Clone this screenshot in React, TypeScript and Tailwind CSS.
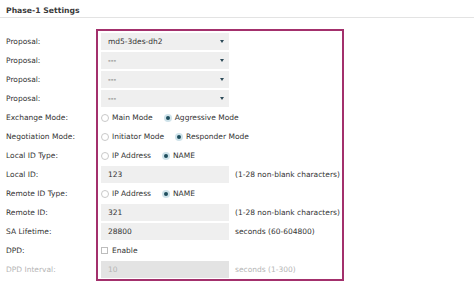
import React from "react";

const Radio = ({ on }: { on?: boolean }) =>
  on ? (
    <span className="w-[8px] h-[8px] rounded-full bg-[#cfe3ea] flex items-center justify-center shrink-0">
      <span className="w-[4px] h-[4px] rounded-full bg-[#1e4e5e]" />
    </span>
  ) : (
    <span className="w-[8px] h-[8px] rounded-full border border-[#c9c9c9] bg-white shrink-0" />
  );

const Select = ({ value }: { value: string }) => (
  <div className="w-[128px] h-[17px] bg-[#efefef] flex items-center justify-between pl-[7px] pr-[5px]">
    <span>{value}</span>
    <span className="w-0 h-0 border-l-[2.5px] border-r-[2.5px] border-t-[3px] border-l-transparent border-r-transparent border-t-[#2c4a58]" />
  </div>
);

const Input = ({ value, disabled }: { value: string; disabled?: boolean }) => (
  <div
    className={
      "w-[128px] h-[17px] flex items-center pl-[7px] " +
      (disabled ? "bg-[#e3e3e3] text-[#b5b5b5]" : "bg-[#efefef]")
    }
  >
    {value}
  </div>
);

const RadioGroup = ({ a, b, sel }: { a: string; b: string; sel: number }) => (
  <div className="flex items-center">
    <Radio on={sel === 0} />
    <span className="ml-[3px] mr-[11px]">{a}</span>
    <Radio on={sel === 1} />
    <span className="ml-[3px]">{b}</span>
  </div>
);

export default function App() {
  const labels: [string, boolean?][] = [
    ["Proposal:"],
    ["Proposal:"],
    ["Proposal:"],
    ["Proposal:"],
    ["Exchange Mode:"],
    ["Negotiation Mode:"],
    ["Local ID Type:"],
    ["Local ID:"],
    ["Remote ID Type:"],
    ["Remote ID:"],
    ["SA Lifetime:"],
    ["DPD:"],
    ["DPD Interval:", true],
  ];
  const row = "h-[19px] flex items-center";
  return (
    <div
      className="w-[474px] h-[281px] overflow-hidden bg-white text-[#333] text-[7.5px]"
      style={{ fontFamily: '"DejaVu Sans", Verdana, sans-serif' }}
    >
      <div className="pt-[6px] pb-[2px] leading-[9px] border-b border-[#e3e3e3] pl-[6px] font-bold text-[7.7px] text-[#3a3a3a]">
        Phase-1 Settings
      </div>
      <div className="flex items-start mt-[11px]">
        <div className="w-[96px] pt-[3px] pl-[6px]">
          {labels.map(([l, dis], i) => (
            <div key={i} className={row + (dis ? " text-[#b5b5b5]" : "")}>
              {l}
            </div>
          ))}
        </div>
        <div className="w-[248px] border-2 border-[#a3306c] pt-[1px] pl-[3px]">
          <div className={row}><Select value="md5-3des-dh2" /></div>
          <div className={row}><Select value="---" /></div>
          <div className={row}><Select value="---" /></div>
          <div className={row}><Select value="---" /></div>
          <div className={row}><RadioGroup a="Main Mode" b="Aggressive Mode" sel={1} /></div>
          <div className={row}><RadioGroup a="Initiator Mode" b="Responder Mode" sel={1} /></div>
          <div className={row}><RadioGroup a="IP Address" b="NAME" sel={1} /></div>
          <div className={row}>
            <Input value="123" />
            <span className="ml-[6px]">(1-28 non-blank characters)</span>
          </div>
          <div className={row}><RadioGroup a="IP Address" b="NAME" sel={1} /></div>
          <div className={row}>
            <Input value="321" />
            <span className="ml-[6px]">(1-28 non-blank characters)</span>
          </div>
          <div className={row}>
            <Input value="28800" />
            <span className="ml-[6px]">seconds (60-604800)</span>
          </div>
          <div className={row}>
            <span className="w-[7px] h-[7px] border border-[#bdbdbd] bg-white" />
            <span className="ml-[4px]">Enable</span>
          </div>
          <div className={row}>
            <Input value="10" disabled />
            <span className="ml-[6px] text-[#b5b5b5]">seconds (1-300)</span>
          </div>
        </div>
      </div>
    </div>
  );
}
